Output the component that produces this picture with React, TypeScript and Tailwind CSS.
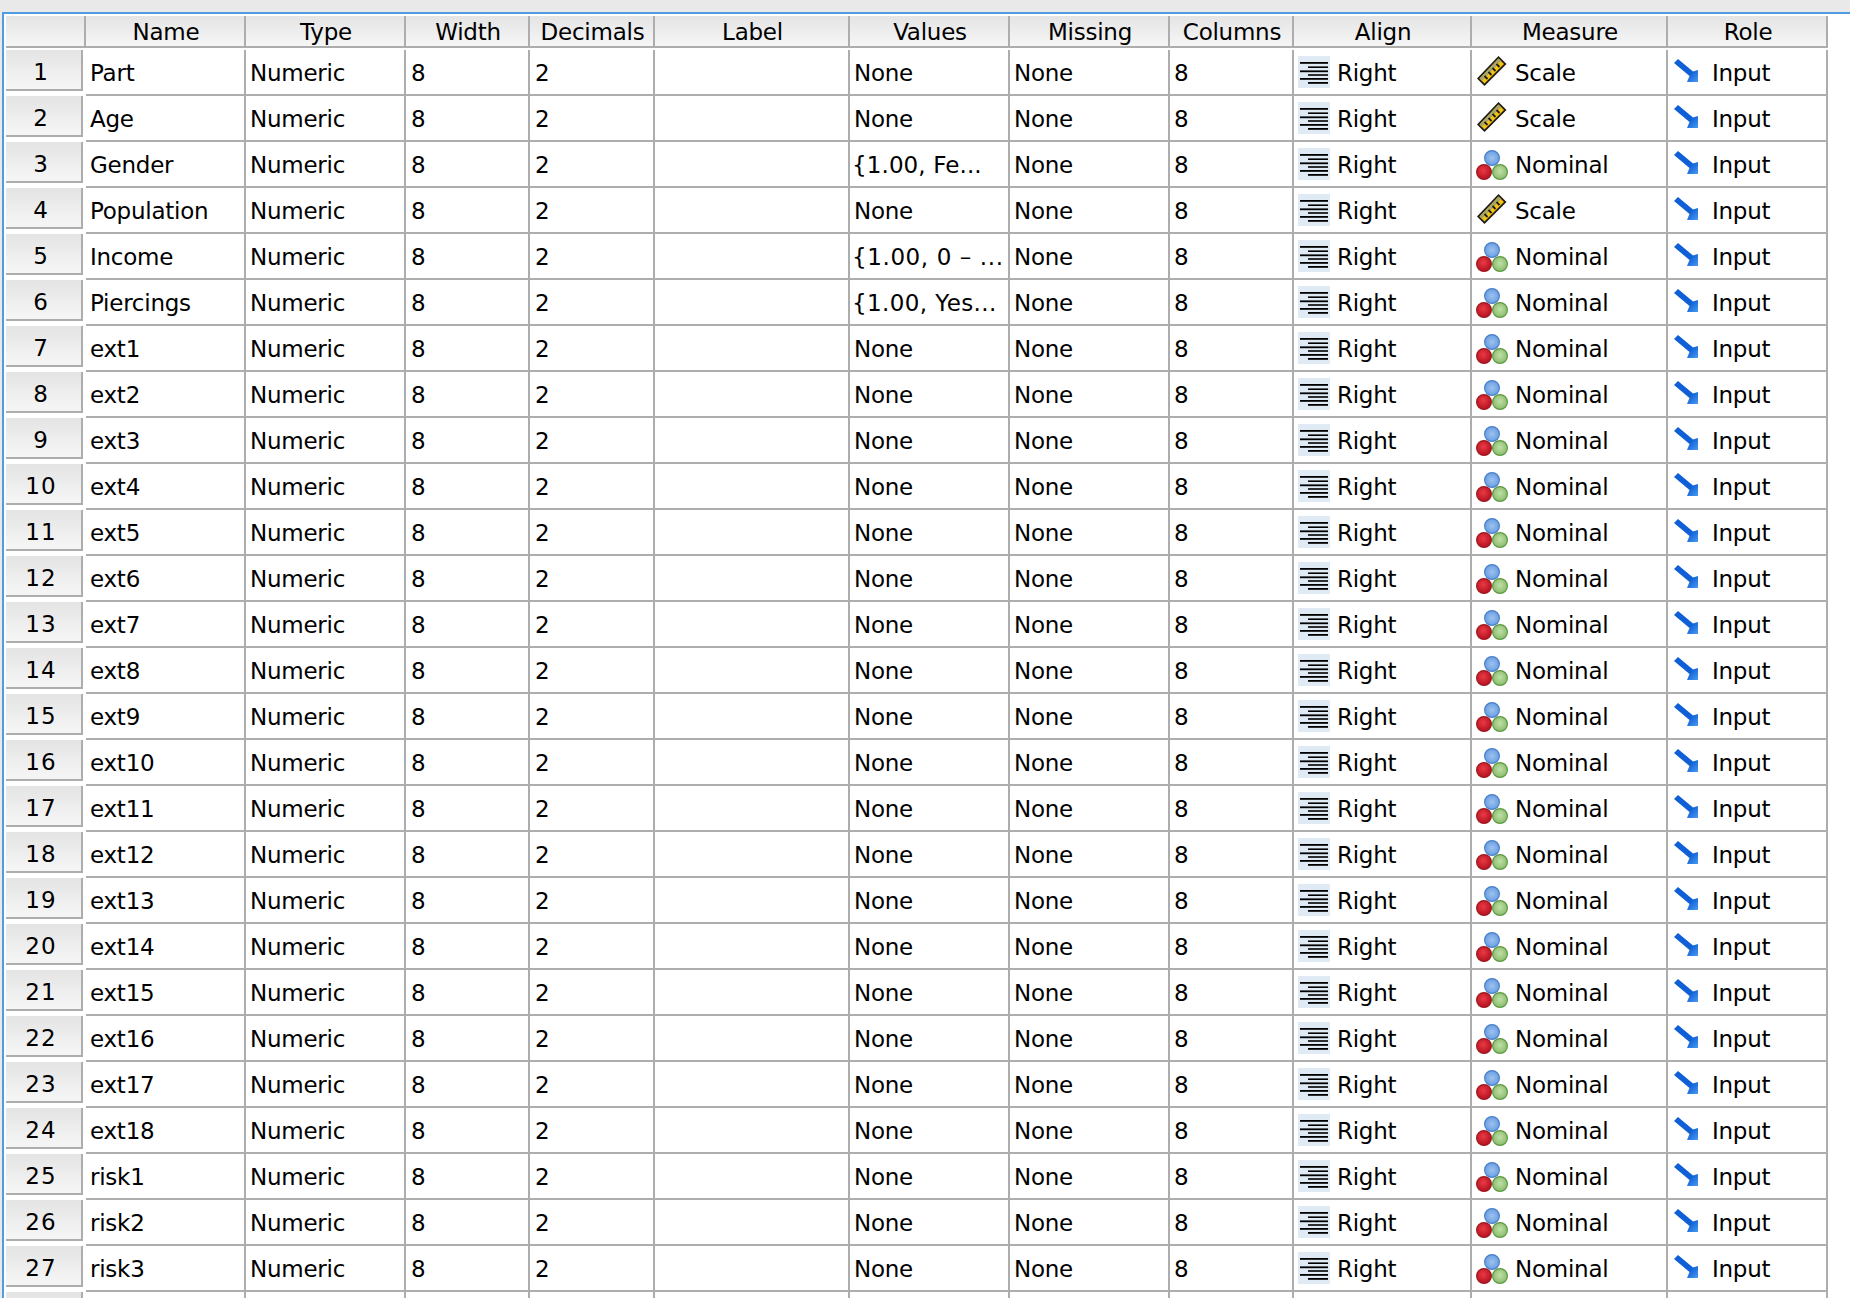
import * as React from 'react';

type Measure = 'Scale' | 'Nominal';

interface Variable {
  name: string;
  values?: string;
  valuesClass?: string;
  measure?: Measure;
}

const columns = [
  { label: '', className: 'w-[80px]' },
  { label: 'Name', className: 'w-[160px]' },
  { label: 'Type', className: 'w-[160px]' },
  { label: 'Width', className: 'w-[124px]' },
  { label: 'Decimals', className: 'w-[125px]' },
  { label: 'Label', className: 'w-[195px]' },
  { label: 'Values', className: 'w-[160px]' },
  { label: 'Missing', className: 'w-[160px]' },
  { label: 'Columns', className: 'w-[124px]' },
  { label: 'Align', className: 'w-[178px]' },
  { label: 'Measure', className: 'w-[196px]' },
  { label: 'Role', className: 'w-[160px]' },
];

const extVars: Variable[] = Array.from({ length: 18 }, (_, i) => ({ name: `ext${i + 1}` }));

const variables: Variable[] = [
  { name: 'Part', measure: 'Scale' },
  { name: 'Age', measure: 'Scale' },
  { name: 'Gender', values: '{1.00, Fe...', valuesClass: '-ml-0.5 tracking-[0.1px]' },
  { name: 'Population', measure: 'Scale' },
  { name: 'Income', values: '{1.00, 0 – ...', valuesClass: '-ml-0.5 tracking-[0.6px]' },
  { name: 'Piercings', values: '{1.00, Yes...', valuesClass: '-ml-0.5 tracking-[0.4px]' },
  ...extVars,
  { name: 'risk1' },
  { name: 'risk2' },
  { name: 'risk3' },
];

const AlignIcon = () => (
  <svg width="32" height="32" viewBox="0 0 32 32" className="shrink-0">
    <rect width="32" height="32" fill="#dfeaf4" />
    <g fill="#000">
      <rect x="2" y="6" width="28" height="1.8" />
      <rect x="10" y="10.4" width="20" height="1.6" />
      <rect x="2" y="14.4" width="28" height="1.8" />
      <rect x="10" y="18.2" width="20" height="1.6" />
      <rect x="2" y="22" width="28" height="1.8" />
      <rect x="10" y="26" width="20" height="1.8" />
    </g>
  </svg>
);

const RulerIcon = () => (
  <svg width="32" height="32" viewBox="0 0 32 32" className="shrink-0">
    <polygon points="1,22.5 22.5,0 30.5,8 8.5,30" fill="#1c1c14" />
    <polygon points="3.5,22.5 22.5,2.5 28,8 8.5,27.5" fill="#f5c211" />
    <polygon points="3.5,22.5 22.5,2.5 25,5 6,25" fill="#a9a468" />
    <g stroke="#1c1c14" strokeWidth="1.8">
      <line x1="8.5" y1="20" x2="11.5" y2="23" />
      <line x1="12.5" y1="16" x2="15.5" y2="19" />
      <line x1="16.5" y1="12" x2="19.5" y2="15" />
      <line x1="20.5" y1="8" x2="23.5" y2="11" />
    </g>
  </svg>
);

const NominalIcon = () => (
  <svg width="32" height="32" viewBox="0 0 32 32" className="shrink-0">
    <defs>
      <radialGradient id="ballBlue" cx="0.5" cy="0.5" r="0.65">
        <stop offset="0" stopColor="#9dc3f0" />
        <stop offset="1" stopColor="#5b93dc" />
      </radialGradient>
      <radialGradient id="ballRed" cx="0.45" cy="0.4" r="0.6">
        <stop offset="0" stopColor="#ea3a44" />
        <stop offset="1" stopColor="#b3121f" />
      </radialGradient>
      <radialGradient id="ballGreen" cx="0.5" cy="0.45" r="0.6">
        <stop offset="0" stopColor="#bfe0a6" />
        <stop offset="1" stopColor="#84b866" />
      </radialGradient>
    </defs>
    <circle cx="16" cy="10" r="7.4" fill="url(#ballBlue)" stroke="#4a80cc" strokeWidth="1.2" />
    <circle cx="24" cy="24" r="7.4" fill="url(#ballGreen)" stroke="#5f9a43" strokeWidth="1.2" />
    <circle cx="8" cy="24" r="7.4" fill="url(#ballRed)" stroke="#a01a22" strokeWidth="1.2" />
  </svg>
);

const InputIcon = () => (
  <svg width="32" height="32" viewBox="0 0 32 32" className="shrink-0">
    <defs>
      <linearGradient id="arrowBlue" x1="0" y1="0" x2="1" y2="1">
        <stop offset="0" stopColor="#0f5fd6" />
        <stop offset="0.65" stopColor="#0f5fd6" />
        <stop offset="1" stopColor="#4a9bf2" />
      </linearGradient>
    </defs>
    <polygon points="2,7 6,3 21,15.5 26,14 26,26 15,26 17.5,20" fill="url(#arrowBlue)" />
  </svg>
);

const Cell = ({
  className,
  textClass,
  icon,
  children,
}: {
  className: string;
  textClass?: string;
  icon?: React.ReactNode;
  children?: React.ReactNode;
}) => (
  <div className={`${className} flex h-full shrink-0 items-center overflow-hidden whitespace-nowrap border-r-2 border-[#adadad] pl-1`}>
    {icon}
    <span className={`pt-[3px] ${textClass ?? ''}`}>{children}</span>
  </div>
);

export default function App() {
  return (
    <div className="h-[1298px] w-[1850px] overflow-hidden bg-[#e9e9e9] pl-0.5 pt-3 font-['DejaVu_Sans',sans-serif] text-[23px] tracking-[-0.25px] text-black">
      <div className="h-full border-l-2 border-t-2 border-[#4f9ce2] bg-white pl-0.5 pt-0.5">
        {/* Header */}
        <div className="flex h-[32px]">
          {columns.map((col, i) => (
            <div
              key={i}
              className={`${col.className} flex h-full shrink-0 items-center justify-center border-b-2 border-r-2 border-[#adadad] bg-gradient-to-b from-[#e4e4e4] to-[#f6f6f6] pl-0.5 pt-0.5`}
            >
              {col.label}
            </div>
          ))}
        </div>

        {/* Rows */}
        <div className="pt-0.5">
          {[...variables, { name: '' }].map((v: Variable, i) => (
            <div key={i} className="flex h-[46px]">
              <div className="h-full w-[80px] shrink-0 pr-[3px]">
                <div className="flex h-[41px] w-full items-center justify-center border-b-2 border-r-2 border-[#adadad] bg-gradient-to-b from-[#e4e4e4] to-[#f6f6f6] pr-[5px] pt-[5px] tracking-[1px]">
                  {i < variables.length ? i + 1 : ''}
                </div>
              </div>
              {i < variables.length ? (
                <div className="flex h-full border-b-2 border-[#adadad]">
                  <Cell className="w-[160px]">{v.name}</Cell>
                  <Cell className="w-[160px]">Numeric</Cell>
                  <Cell className="w-[124px]" textClass="pl-px">8</Cell>
                  <Cell className="w-[125px]" textClass="pl-px">2</Cell>
                  <Cell className="w-[195px]" />
                  <Cell className="w-[160px]" textClass={v.valuesClass}>{v.values ?? 'None'}</Cell>
                  <Cell className="w-[160px]">None</Cell>
                  <Cell className="w-[124px]">8</Cell>
                  <Cell className="w-[178px] gap-[7px]" icon={<AlignIcon />}>
                    Right
                  </Cell>
                  <Cell
                    className="w-[196px] gap-[7px]"
                    icon={v.measure === 'Scale' ? <RulerIcon /> : <NominalIcon />}
                  >
                    {v.measure ?? 'Nominal'}
                  </Cell>
                  <Cell className="w-[160px] gap-2" icon={<InputIcon />}>
                    Input
                  </Cell>
                </div>
              ) : (
                <div className="flex h-full">
                  {columns.slice(1).map((col, c) => (
                    <Cell key={c} className={col.className} />
                  ))}
                </div>
              )}
            </div>
          ))}
        </div>
      </div>
    </div>
  );
}
